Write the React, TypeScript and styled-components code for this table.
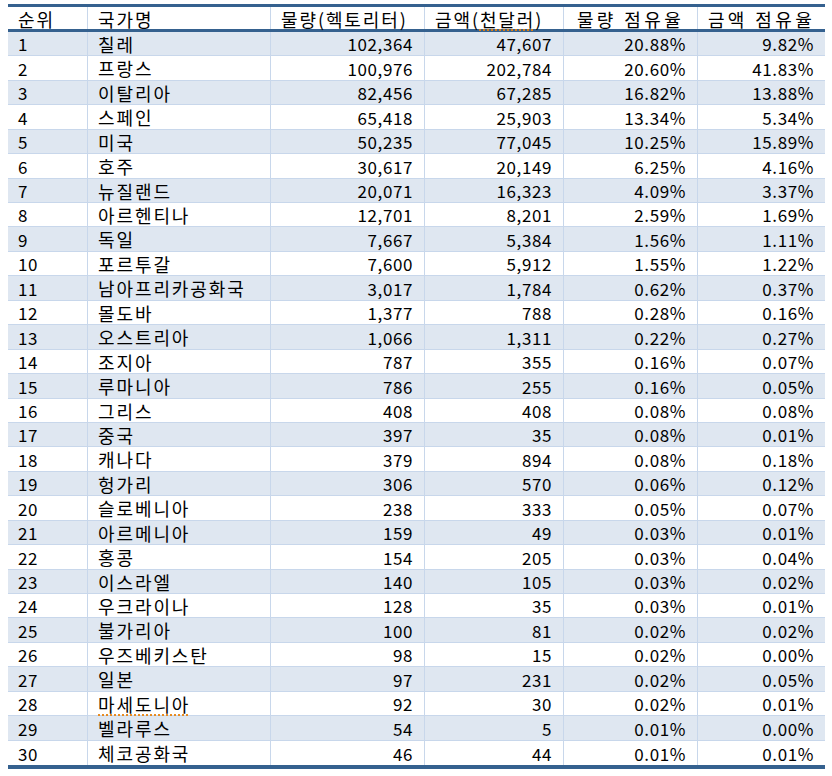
import React from "react";
import styled, { createGlobalStyle } from "styled-components";

const GlobalStyle = createGlobalStyle`
  html, body { margin: 0; padding: 0; background: #ffffff; }
  body { font-family: "Noto Sans CJK KR", "Noto Sans", sans-serif; color: #000; }
`;

type Row = [string, string, string, string, string];

const rows: Row[] = [
  ["칠레", "102,364", "47,607", "20.88%", "9.82%"],
  ["프랑스", "100,976", "202,784", "20.60%", "41.83%"],
  ["이탈리아", "82,456", "67,285", "16.82%", "13.88%"],
  ["스페인", "65,418", "25,903", "13.34%", "5.34%"],
  ["미국", "50,235", "77,045", "10.25%", "15.89%"],
  ["호주", "30,617", "20,149", "6.25%", "4.16%"],
  ["뉴질랜드", "20,071", "16,323", "4.09%", "3.37%"],
  ["아르헨티나", "12,701", "8,201", "2.59%", "1.69%"],
  ["독일", "7,667", "5,384", "1.56%", "1.11%"],
  ["포르투갈", "7,600", "5,912", "1.55%", "1.22%"],
  ["남아프리카공화국", "3,017", "1,784", "0.62%", "0.37%"],
  ["몰도바", "1,377", "788", "0.28%", "0.16%"],
  ["오스트리아", "1,066", "1,311", "0.22%", "0.27%"],
  ["조지아", "787", "355", "0.16%", "0.07%"],
  ["루마니아", "786", "255", "0.16%", "0.05%"],
  ["그리스", "408", "408", "0.08%", "0.08%"],
  ["중국", "397", "35", "0.08%", "0.01%"],
  ["캐나다", "379", "894", "0.08%", "0.18%"],
  ["헝가리", "306", "570", "0.06%", "0.12%"],
  ["슬로베니아", "238", "333", "0.05%", "0.07%"],
  ["아르메니아", "159", "49", "0.03%", "0.01%"],
  ["홍콩", "154", "205", "0.03%", "0.04%"],
  ["이스라엘", "140", "105", "0.03%", "0.02%"],
  ["우크라이나", "128", "35", "0.03%", "0.01%"],
  ["불가리아", "100", "81", "0.02%", "0.02%"],
  ["우즈베키스탄", "98", "15", "0.02%", "0.00%"],
  ["일본", "97", "231", "0.02%", "0.05%"],
  ["마세도니아", "92", "30", "0.02%", "0.01%"],
  ["벨라루스", "54", "5", "0.01%", "0.00%"],
  ["체코공화국", "46", "44", "0.01%", "0.01%"],
];

const Page = styled.div`
  padding: 4px 0 0 8px;
`;

const Table = styled.div`
  width: 817px;
  border-top: 3px solid #35618f;
  border-bottom: 4px solid #35618f;
`;

const Grid = styled.div<{ $h: number; $shade?: boolean; $head?: boolean }>`
  display: grid;
  grid-template-columns: 79px 183px 154px 139px 134px 128px;
  height: ${(p) => p.$h}px;
  box-sizing: border-box;
  background: ${(p) => (p.$shade ? "#dfe7f1" : "#ffffff")};
  border-bottom: ${(p) => (p.$head ? "3px solid #35618f" : "1px solid #c8d7eb")};
  &:last-child { border-bottom: none; }
`;

const Cell = styled.div<{ $right?: boolean }>`
  box-sizing: border-box;
  display: flex;
  align-items: center;
  justify-content: ${(p) => (p.$right ? "flex-end" : "flex-start")};
  padding: 0 ${(p) => (p.$right ? "11px" : "0")} 0 ${(p) => (p.$right ? "0" : "10px")};
  font-size: 17px;
  letter-spacing: 0.6px;
  line-height: 1;
  white-space: nowrap;
  & + & { border-left: 1px solid #c8d7eb; }
`;

const HeadCell = styled(Cell)<{ $center?: boolean }>`
  padding-top: 1px;
  ${(p) => (p.$center ? "justify-content: center; padding-left: 0; padding-right: 0;" : "")}
`;

const Ko = styled.span<{ $wide?: boolean }>`
  font-size: 18px;
  letter-spacing: ${(p) => (p.$wide ? "3.4px" : "1.9px")};
`;

const Spell = styled.span`
  text-decoration: underline dotted #e8820c;
  text-underline-offset: 3px;
`;

const ROW_H = 733 / 30;

export default function App() {
  return (
    <>
      <GlobalStyle />
      <Page>
        <Table>
          <Grid $h={25} $head>
            <HeadCell><Ko>순위</Ko></HeadCell>
            <HeadCell><Ko>국가명</Ko></HeadCell>
            <HeadCell><Ko>물량(헥토리터)</Ko></HeadCell>
            <HeadCell>
              <Ko>
                금액(<Spell>천달러</Spell>)
              </Ko>
            </HeadCell>
            <HeadCell $center><Ko $wide>물량 점유율</Ko></HeadCell>
            <HeadCell $center><Ko $wide>금액 점유율</Ko></HeadCell>
          </Grid>
          {rows.map((r, i) => {
            const h = Math.round((i + 1) * ROW_H) - Math.round(i * ROW_H);
            return (
              <Grid key={i} $h={h} $shade={i % 2 === 0}>
                <Cell>{i + 1}</Cell>
                <Cell>
                  <Ko>{r[0] === "마세도니아" ? <Spell>{r[0]}</Spell> : r[0]}</Ko>
                </Cell>
                <Cell $right>{r[1]}</Cell>
                <Cell $right>{r[2]}</Cell>
                <Cell $right>{r[3]}</Cell>
                <Cell $right>{r[4]}</Cell>
              </Grid>
            );
          })}
        </Table>
      </Page>
    </>
  );
}
